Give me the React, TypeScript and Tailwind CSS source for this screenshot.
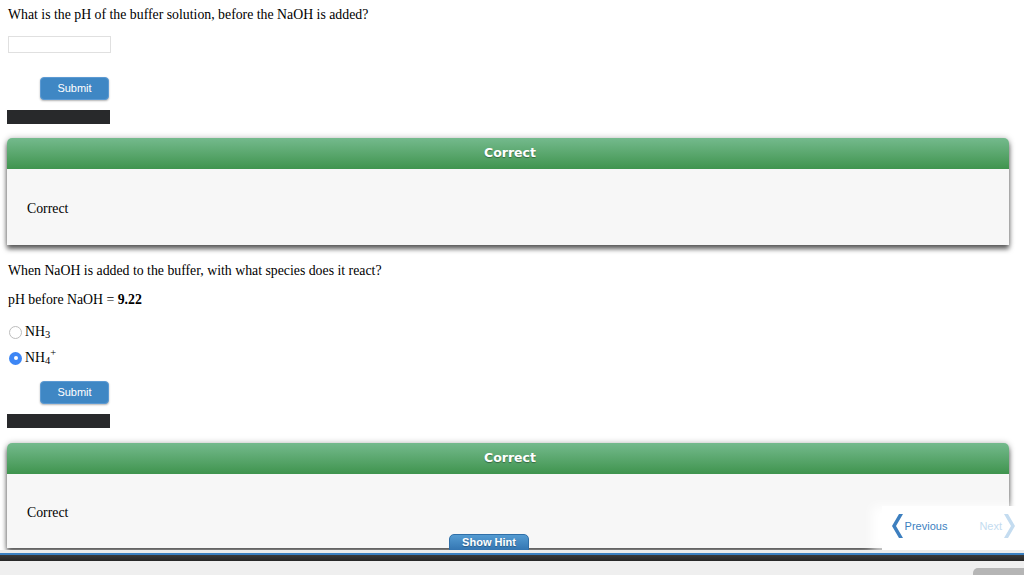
import React from "react";

const serif = { fontFamily: '"Liberation Serif", "Times New Roman", serif' };

function SubmitButton() {
  return (
    <button className="ml-[40px] flex h-[23px] w-[69px] items-center justify-center rounded-[4px] border border-[#5c9ad3] bg-[#3f87c4] font-['Liberation_Sans',Arial,sans-serif] text-[11px] text-white shadow-[0_1px_2px_rgba(0,0,0,0.3)]">
      Submit
    </button>
  );
}

function CorrectCard({ bodyH }: { bodyH: string }) {
  return (
    <div className="ml-[7px] w-[1002px] rounded-t-[5px] bg-[#f7f7f7] shadow-[0_4px_5px_rgba(0,0,0,0.6),0_0_6px_rgba(0,0,0,0.25)]">
      <div className="flex h-[31px] items-center justify-center rounded-t-[5px] bg-gradient-to-b from-[#74ba8d] to-[#3f944e] pl-[4px] font-['DejaVu_Sans',sans-serif] text-[12.5px] font-bold text-white [text-shadow:0_1px_1px_rgba(0,0,0,0.35)]">
        Correct
      </div>
      <div className={`flex ${bodyH} items-center pl-[20px] pt-[4px] text-[13.8px] text-black`} style={serif}>
        Correct
      </div>
    </div>
  );
}

function Radio({ checked }: { checked?: boolean }) {
  return checked ? (
    <span className="flex h-[13px] w-[13px] items-center justify-center rounded-full bg-[#3d86f5]">
      <span className="h-[4px] w-[4px] rounded-full bg-white" />
    </span>
  ) : (
    <span className="h-[13px] w-[13px] rounded-full border border-[#bdbdbd] bg-white" />
  );
}

export default function App() {
  return (
    <div className="relative h-[575px] w-[1024px] overflow-hidden bg-white text-black">
      <div className="flex flex-col items-start pt-[6px]">
        <div className="ml-[8px] text-[13.8px] leading-[18px]" style={serif}>
          What is the pH of the buffer solution, before the NaOH is added?
        </div>
        <div className="ml-[8px] mt-[12px] h-[17px] w-[103px] border border-[#e0e0e0] bg-white" />
        <div className="mt-[24px]">
          <SubmitButton />
        </div>
        <div className="ml-[7px] mt-[10px] h-[14px] w-[103px] bg-[#28292b]" />
        <div className="mt-[14px]">
          <CorrectCard bodyH="h-[76px]" />
        </div>
        <div className="ml-[8px] mt-[17px] text-[13.8px] leading-[18px]" style={serif}>
          When NaOH is added to the buffer, with what species does it react?
        </div>
        <div className="ml-[8px] mt-[11px] text-[13.8px] leading-[18px]" style={serif}>
          pH before NaOH = <b>9.22</b>
        </div>
        <div className="ml-[9px] mt-[14px] flex h-[18px] items-center gap-[3px] text-[13.8px]" style={serif}>
          <Radio />
          <span>
            NH<sub className="text-[10.5px]">3</sub>
          </span>
        </div>
        <div className="ml-[9px] mt-[8px] flex h-[18px] items-center gap-[3px] text-[13.8px]" style={serif}>
          <Radio checked />
          <span>
            NH<sub className="text-[10.5px]">4</sub>
            <sup className="text-[10.5px]">+</sup>
          </span>
        </div>
        <div className="mt-[14px]">
          <SubmitButton />
        </div>
        <div className="ml-[7px] mt-[10px] h-[14px] w-[103px] bg-[#28292b]" />
        <div className="mt-[15px]">
          <CorrectCard bodyH="h-[74px]" />
        </div>
      </div>

      {/* Previous / Next overlay */}
      <div className="absolute bottom-[25px] right-0 flex h-[44px] w-[142px] items-center justify-end bg-white pb-[4px] pr-[9px] shadow-[-10px_0_10px_rgba(255,255,255,1)] font-['Liberation_Sans',Arial,sans-serif] text-[11px]">
        <div className="flex items-center text-[#3d7fbf]">
          <svg width="11" height="24" viewBox="0 0 11 24" className="mr-[2px]">
            <polygon points="7,0 11,0 4,12 11,24 7,24 0,12" fill="#3d7fbf" />
          </svg>
          <span>Previous</span>
        </div>
        <div className="ml-[32px] flex items-center text-[#c4dcf0]">
          <span>Next</span>
          <svg width="11" height="24" viewBox="0 0 11 24" className="ml-[2px]">
            <polygon points="0,0 4,0 11,12 4,24 0,24 7,12" fill="#c4dcf0" />
          </svg>
        </div>
      </div>

      {/* Show hint tab */}
      <div className="absolute left-[449px] top-[534px] flex h-[17px] w-[80px] items-center justify-center rounded-t-[5px] border border-[#2f6fa8] bg-gradient-to-b from-[#549bd2] to-[#3476b2] font-['Liberation_Sans',Arial,sans-serif] text-[11px] font-bold text-white [text-shadow:0_1px_1px_rgba(0,0,0,0.3)]">
        Show Hint
      </div>

      {/* Footer */}
      <div className="absolute bottom-0 left-0 flex w-[1024px] flex-col">
        <div className="h-[3px] bg-[#ececec]" />
        <div className="h-[2px] bg-[#3b80c1]" />
        <div className="h-[6px] bg-gradient-to-b from-[#3a3a3a] to-[#262626]" />
        <div className="relative h-[14px] bg-[#efefef]">
          <div className="absolute left-[973px] top-[7px] h-[10px] w-[60px] rounded-t-[5px] bg-[#b5b5b5]" />
        </div>
      </div>
    </div>
  );
}
